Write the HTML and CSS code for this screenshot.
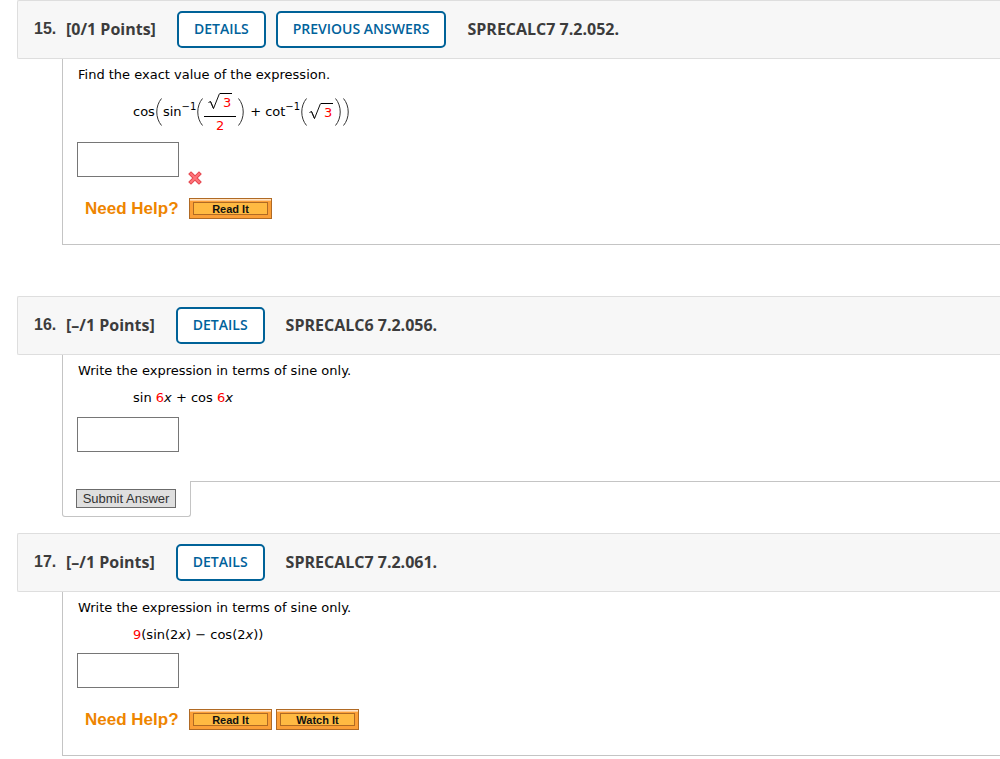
FILE: index.html
```html
<!DOCTYPE html>
<html lang="en">
<head>
<meta charset="utf-8">
<title>Assignment</title>
<link rel="stylesheet" href="styles.css">
</head>
<body>
<svg width="0" height="0" class="defs" aria-hidden="true">
  <symbol id="open" viewBox="0 0 6 28"><path d="M5.500 .5C-.8 8-.8 20 5.500 27.500"/></symbol>
  <symbol id="close" viewBox="0 0 6 28"><path d="M.5 .5C6.800 8 6.800 20 .5 27.500"/></symbol>
  <symbol id="root" viewBox="0 0 12 17"><path d="M.5 9.500L2.500 8.500L5.500 15.500L11.500 .5"/><path d="M2.500 8.500L5.500 15.500"/></symbol>
</svg>
<main>
  <section class="question question-graded">
    <header class="bar">
      <span class="number">15.</span>
      <span class="points">[0/1 Points]</span>
      <div class="actions">
        <button class="outline" type="button">DETAILS</button>
        <button class="outline" type="button">PREVIOUS ANSWERS</button>
      </div>
      <h2 class="code">SPRECALC7 7.2.052.</h2>
    </header>
    <div class="body closed">
      <label class="prompt" for="a15">Find the exact value of the expression.</label>
      <div class="math">
        <span>cos</span><svg class="paren"><use href="#open"/></svg>
        <span>sin</span><sup>−1</sup><svg class="paren"><use href="#open"/></svg>
        <span class="fraction">
          <span class="numerator"><span class="radical"><svg class="root"><use href="#root"/></svg><span class="radicand">3</span></span></span>
          <span class="denominator">2</span>
        </span>
        <svg class="paren"><use href="#close"/></svg>
        <span class="plus">+</span>
        <span>cot</span><sup>−1</sup><svg class="paren"><use href="#open"/></svg>
        <span class="radical"><svg class="root"><use href="#root"/></svg><span class="radicand">3</span></span>
        <svg class="paren"><use href="#close"/></svg>
        <svg class="paren"><use href="#close"/></svg>
      </div>
      <div class="answer">
        <input id="a15" type="text">
        <svg class="wrong" viewBox="0 0 14 14" role="img" aria-label="Incorrect">
          <path class="wrong-edge" d="M3 3L11 11M11 3L3 11"/>
          <path class="wrong-fill" d="M3 3L11 11M11 3L3 11"/>
        </svg>
      </div>
      <div class="help">
        <span class="help-label">Need Help?</span>
        <button class="help-button" type="button">Read It</button>
      </div>
    </div>
  </section>

  <section class="question">
    <header class="bar">
      <span class="number">16.</span>
      <span class="points">[–/1 Points]</span>
      <div class="actions">
        <button class="outline" type="button">DETAILS</button>
      </div>
      <h2 class="code">SPRECALC6 7.2.056.</h2>
    </header>
    <div class="body">
      <label class="prompt" for="a16">Write the expression in terms of sine only.</label>
      <p class="expression">sin <b>6</b><i>x</i> + cos <b>6</b><i>x</i></p>
      <div class="answer"><input id="a16" type="text"></div>
    </div>
    <div class="submit-row">
      <div class="submit-tab"><button class="submit" type="button">Submit Answer</button></div>
      <div class="submit-rule"></div>
    </div>
  </section>

  <section class="question">
    <header class="bar">
      <span class="number">17.</span>
      <span class="points">[–/1 Points]</span>
      <div class="actions">
        <button class="outline" type="button">DETAILS</button>
      </div>
      <h2 class="code">SPRECALC7 7.2.061.</h2>
    </header>
    <div class="body closed">
      <label class="prompt" for="a17">Write the expression in terms of sine only.</label>
      <p class="expression"><b>9</b>(sin(2<i>x</i>) − cos(2<i>x</i>))</p>
      <div class="answer"><input id="a17" type="text"></div>
      <div class="help">
        <span class="help-label">Need Help?</span>
        <button class="help-button" type="button">Read It</button>
        <button class="help-button" type="button">Watch It</button>
      </div>
    </div>
  </section>
</main>
</body>
</html>
```
FILE: styles.css
```css
* { box-sizing: border-box; }
body {
  margin: 0;
  background: #fff;
  color: #000;
  font: 13px/18px Verdana, "DejaVu Sans", sans-serif;
}
main { padding-left: 17px; }
.defs { position: absolute; }

.question { margin-bottom: 16px; }
.question-graded { margin-bottom: 51px; }
.question:last-child { margin-bottom: 0; }

.bar {
  display: flex;
  align-items: center;
  min-height: 59px;
  padding-left: 16px;
  background: #f7f7f7;
  border: 1px solid #dedede;
  border-right: 0;
  border-radius: 2px 0 0 2px;
  color: #3c3c3c;
  font: 700 16px/22px "Open Sans", sans-serif;
}
.number { width: 32px; padding-bottom: 2px; font-family: Arial, "Liberation Sans", sans-serif; }
.points, .code { padding-bottom: 1px; }
.actions { display: flex; gap: 10px; margin: 0 21px; }
.code { margin: 0; font-size: 16px; }
.outline {
  height: 37px;
  padding: 0 15px 1px;
  background: #fff;
  border: 2px solid #006298;
  border-radius: 5px;
  color: #00629b;
  font: 600 14px/20px "Open Sans", sans-serif;
}

.body {
  margin-left: 45px;
  padding: 7px 14px 0;
  border-left: 1px solid #c4c4c4;
}
.closed {
  padding-bottom: 25px;
  border-bottom: 1px solid #c4c4c4;
}
.prompt { display: block; padding-left: 1px; }
.expression { margin: 9px 0 10px; padding-left: 56px; }
.closed .expression { margin-bottom: 9px; }
.expression b, .radicand, .denominator { color: #f00; font-weight: 400; }

.math {
  display: flex;
  align-items: center;
  height: 39px;
  margin: 9px 0 10px;
  padding: 0 0 2px 56px;
}
.math sup { align-self: flex-start; padding-top: 7px; font-size: 10px; line-height: 14px; }
.paren { width: 6px; height: 28px; margin: 0 1px; fill: none; stroke: #333; stroke-width: 1; }
.fraction { display: flex; flex-direction: column; width: 32px; margin-right: 1px; }
.numerator {
  display: flex;
  justify-content: center;
  height: 24px;
  border-bottom: 1px solid #000;
}
.denominator { height: 13px; line-height: 18px; text-align: center; }
.radical { display: flex; padding: 0 1px; }
.root { width: 12px; height: 17px; fill: none; stroke: #111; stroke-width: 1; }
.radicand { height: 17px; padding: 0 1px 0 3px; border-top: 1px solid #000; line-height: 18px; }
.plus { margin: 0 4px 0 5px; }

.answer { display: flex; min-height: 43px; }
.answer input {
  width: 102px;
  height: 35px;
  padding: 2px 6px;
  border: 1px solid #767676;
  font: inherit;
}
.wrong { align-self: flex-end; width: 14px; height: 14px; margin-left: 9px; }
.wrong path { fill: none; stroke-linecap: square; }
.wrong-edge { stroke: #e54850; stroke-width: 4; }
.wrong-fill { stroke: #ff747a; stroke-width: 2; }

.help { display: flex; align-items: center; gap: 4px; margin-top: 13px; padding-left: 8px; }
.help-label {
  width: 100px;
  color: #ee8500;
  font: 700 17px/21px Arial, "Liberation Sans", sans-serif;
}
.help-button {
  width: 83px;
  height: 21px;
  padding: 2px 3px 1px;
  background: #ffba42;
  border: 1px solid #b06a24;
  color: #111;
  font: 700 11px/16px Arial, "Liberation Sans", sans-serif;
  box-shadow: inset 0 1px #ffe3c4, inset 0 2px #ffc98c, inset 0 0 0 3px #fb9f37, inset 0 0 0 4px #b06a24;
}

.submit-row { display: flex; margin-left: 45px; padding-top: 21px; background: linear-gradient(#c4c4c4, #c4c4c4) 0 0 / 1px 21px no-repeat; }
.submit-tab {
  width: 129px;
  height: 36px;
  padding: 8px 13px;
  border: solid #c4c4c4;
  border-width: 0 1px 1px;
  border-radius: 0 0 3px 3px;
}
.submit-rule { flex: 1; border-top: 1px solid #c4c4c4; }
.submit {
  display: block;
  width: 100px;
  height: 19px;
  padding: 0;
  background: #dfdfdf;
  border: 1px solid #6b6b6b;
  color: #333;
  font: 13px/17px Arial, "Liberation Sans", sans-serif;
}
```
